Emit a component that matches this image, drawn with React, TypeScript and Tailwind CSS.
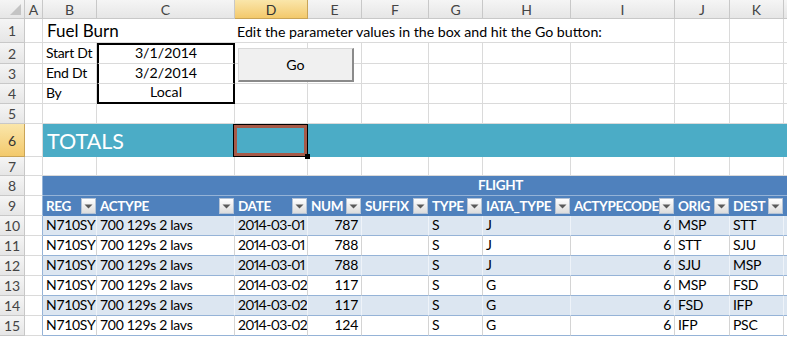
import React from "react";

const LETTERS = ["A", "B", "C", "D", "E", "F", "G", "H", "I", "J", "K", ""];
const GRID = "border-r border-b border-[#dadada]";
const TXT = "text-[14px] tracking-[-0.3px] leading-[18px]";
const DATE_TXT = "text-[14px] tracking-[-0.7px] leading-[18px] [font-variant-numeric:proportional-nums]";

const HEADS = ["REG", "ACTYPE", "DATE", "NUM", "SUFFIX", "TYPE", "IATA_TYPE", "ACTYPECODE", "ORIG", "DEST", ""];
const RIGHT = [false, false, false, true, false, false, false, true, false, false, false];

const DATA = [
  { n: 10, d: ["N710SY", "700 129s 2 lavs", "2014-03-01", "787", "", "S", "J", "6", "MSP", "STT", ""] },
  { n: 11, d: ["N710SY", "700 129s 2 lavs", "2014-03-01", "788", "", "S", "J", "6", "STT", "SJU", ""] },
  { n: 12, d: ["N710SY", "700 129s 2 lavs", "2014-03-01", "788", "", "S", "J", "6", "SJU", "MSP", ""] },
  { n: 13, d: ["N710SY", "700 129s 2 lavs", "2014-03-02", "117", "", "S", "G", "6", "MSP", "FSD", ""] },
  { n: 14, d: ["N710SY", "700 129s 2 lavs", "2014-03-02", "117", "", "S", "G", "6", "FSD", "IFP", ""] },
  { n: 15, d: ["N710SY", "700 129s 2 lavs", "2014-03-02", "124", "", "S", "G", "6", "IFP", "PSC", ""] },
];

const RowHead: React.FC<{ n: number; sel?: boolean }> = ({ n, sel }) => (
  <div
    className={
      sel
        ? "flex items-center justify-center border-r border-b border-[#c9a457] bg-linear-to-b from-[#fae6aa] to-[#f3c96b] text-[14px] text-[#333]"
        : "flex items-center justify-center border-r border-b border-[#c8c8c8] bg-linear-to-b from-[#f5f5f5] to-[#e6e6e6] text-[14px] text-[#444]"
    }
  >
    {n}
  </div>
);

const Blank: React.FC = () => <div className={GRID} />;

const FilterButton: React.FC = () => (
  <div className="flex h-[16px] w-[15px] shrink-0 items-center justify-center border border-[#b4c3d6] bg-linear-to-b from-[#ffffff] to-[#dcdcdc]">
    <svg width="9" height="5" viewBox="0 0 9 5">
      <polygon points="0.5,0.5 8.5,0.5 4.5,4.5" fill="#5a5a5a" />
    </svg>
  </div>
);

export default function App() {
  return (
    <div className="relative h-[337px] w-[787px] overflow-hidden bg-white text-black [font-family:Lato,'Liberation_Sans',sans-serif]">
      <div className="grid grid-cols-[25px_18px_54px_138px_73px_54px_67px_54px_88px_104px_55px_54px_60px] grid-rows-[19px_24px_21px_20px_20px_20px_33px_19px_20px_20px_20px_20px_20px_20px_20px_20px]">
        {/* column headers */}
        <div className="relative border-r border-b border-[#c8c8c8] bg-linear-to-b from-[#f5f5f5] to-[#e6e6e6]">
          <svg className="absolute right-[3px] bottom-[3px]" width="11" height="11" viewBox="0 0 11 11">
            <polygon points="11,0 11,11 0,11" fill="#c4c4c4" />
          </svg>
        </div>
        {LETTERS.map((l, i) =>
          l === "D" ? (
            <div
              key={i}
              className="flex items-center justify-center border-r border-b border-[#c9a457] bg-linear-to-b from-[#fae6aa] to-[#f3c96b] text-[14px] text-[#333]"
            >
              {l}
            </div>
          ) : (
            <div
              key={i}
              className="flex items-center justify-center border-r border-b border-[#c8c8c8] bg-linear-to-b from-[#f5f5f5] to-[#e6e6e6] text-[14px] text-[#444]"
            >
              {l}
            </div>
          )
        )}

        {/* row 1 */}
        <RowHead n={1} />
        <Blank />
        <div className="col-span-2 flex items-end border-b border-[#dadada] pl-[4px] text-[17px] leading-[22px] whitespace-nowrap">
          Fuel Burn
        </div>
        <div className="col-span-6 flex items-end border-r border-b border-[#dadada] pb-[1px] pl-[2px] text-[14.2px] leading-[18px] whitespace-nowrap">
          Edit the parameter values in the box and hit the Go button:
        </div>
        <Blank />
        <Blank />
        <Blank />

        {/* rows 2-4 with parameter box */}
        {[
          { n: 2, label: "Start Dt", value: "3/1/2014", box: "border-l-2 border-r-2 border-t-2 border-b border-l-black border-r-black border-t-black border-b-[#dadada]" },
          { n: 3, label: "End Dt", value: "3/2/2014", box: "border-l-2 border-r-2 border-b border-l-black border-r-black border-b-[#dadada]" },
          { n: 4, label: "By", value: "Local", box: "border-l-2 border-r-2 border-b-2 border-black" },
        ].map((r) => (
          <React.Fragment key={r.n}>
            <RowHead n={r.n} />
            <Blank />
            <div className={`${GRID} flex items-end pb-[1px] pl-[3px] whitespace-nowrap ${TXT}`}>{r.label}</div>
            <div className={`${r.box} flex items-end justify-center pb-[1px] text-[14.2px] leading-[18px]`}>{r.value}</div>
            {Array.from({ length: 9 }).map((_, i) => (
              <Blank key={i} />
            ))}
          </React.Fragment>
        ))}

        {/* row 5 */}
        <RowHead n={5} />
        {Array.from({ length: 12 }).map((_, i) => (
          <Blank key={i} />
        ))}

        {/* row 6 totals */}
        <RowHead n={6} sel />
        <Blank />
        <div className="col-span-2 flex items-center bg-[#4bacc6] pl-[4px] text-[21.5px] leading-[28px] text-white">
          TOTALS
        </div>
        <div className="relative bg-[#4bacc6]">
          <div className="absolute top-0 -left-[2px] right-0 bottom-0 border border-black">
            <div className="h-full w-full border-[3px] border-[#a65a48]" />
          </div>
          <div className="absolute -right-[2px] -bottom-[2px] h-[5px] w-[5px] bg-black" />
        </div>
        {Array.from({ length: 8 }).map((_, i) => (
          <div key={i} className="bg-[#4bacc6]" />
        ))}

        {/* row 7 */}
        <RowHead n={7} />
        {Array.from({ length: 12 }).map((_, i) => (
          <Blank key={i} />
        ))}

        {/* row 8 group header */}
        <RowHead n={8} />
        <div className="border-r border-b border-r-[#95b3d7] border-b-[#dadada]" />
        <div className="col-span-11 flex items-center border-b border-[#95b3d7] bg-[#4f81bd] pl-[435px] text-[13.5px] font-bold tracking-[-0.3px] text-white">
          FLIGHT
        </div>

        {/* row 9 column titles */}
        <RowHead n={9} />
        <div className="border-r border-b border-r-[#95b3d7] border-b-[#dadada]" />
        {HEADS.map((h, i) => (
          <div key={i} className="flex items-center justify-between overflow-hidden bg-[#4f81bd] pr-[1px] pl-[3px]">
            <span className="text-[13.5px] leading-[18px] font-bold tracking-[-0.35px] whitespace-nowrap text-white">{h}</span>
            {h && <FilterButton />}
          </div>
        ))}

        {/* data rows */}
        {DATA.map((row) => {
          const band = row.n % 2 === 0;
          return (
            <React.Fragment key={row.n}>
              <RowHead n={row.n} />
              <div className="border-r border-b border-r-[#95b3d7] border-b-[#dadada]" />
              {row.d.map((v, i) =>
                band ? (
                  <div
                    key={i}
                    className={`flex items-end overflow-hidden border-r border-b border-r-[#eef3f9] border-b-[#95b3d7] bg-[#dce6f1] pb-[1px] whitespace-nowrap ${
                      i === 2 ? DATE_TXT : TXT
                    } ${RIGHT[i] ? "justify-end pr-[3px]" : "pl-[3px]"}`}
                  >
                    {v}
                  </div>
                ) : (
                  <div
                    key={i}
                    className={`flex items-end overflow-hidden border-r border-b border-r-[#d4d4d4] border-b-[#95b3d7] bg-white pb-[1px] whitespace-nowrap ${
                      i === 2 ? DATE_TXT : TXT
                    } ${RIGHT[i] ? "justify-end pr-[3px]" : "pl-[3px]"}`}
                  >
                    {v}
                  </div>
                )
              )}
            </React.Fragment>
          );
        })}
      </div>

      {/* Go button form control */}
      <button
        type="button"
        className="absolute top-[48px] left-[238px] flex h-[34px] w-[116px] items-center justify-center border-t border-l border-[#d8d8d8] border-r-2 border-b-2 border-r-[#8a8a8a] border-b-[#8a8a8a] bg-[#f0f0f0] text-[14.2px]"
      >
        Go
      </button>
    </div>
  );
}
